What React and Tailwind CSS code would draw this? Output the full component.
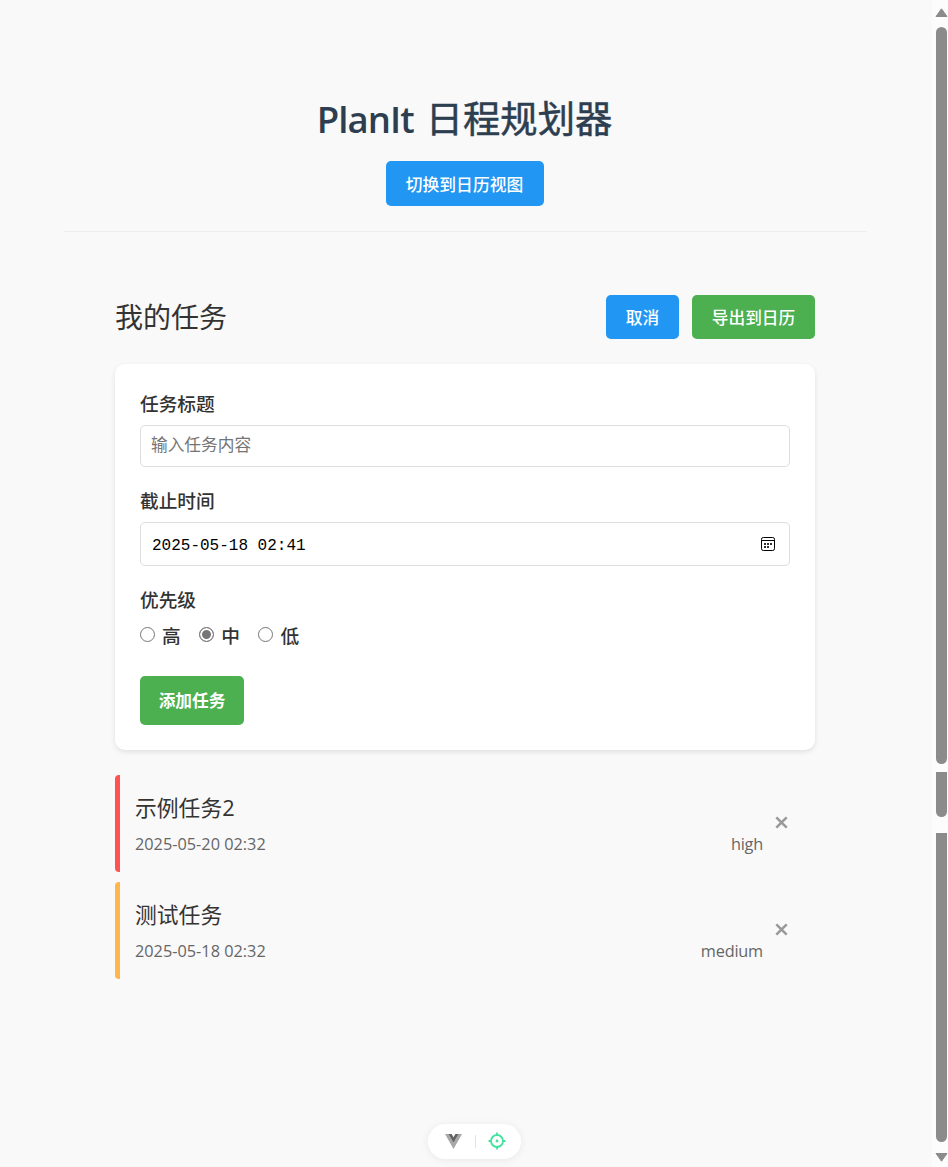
import { useState } from "react";

const PRIORITIES = [
  { value: "high", label: "高" },
  { value: "medium", label: "中" },
  { value: "low", label: "低" },
];

const INITIAL_TASKS = [
  { id: 2, title: "示例任务2", deadline: "2025-05-20 02:32", priority: "high" },
  { id: 1, title: "测试任务", deadline: "2025-05-18 02:32", priority: "medium" },
];

const BORDER_COLORS = {
  high: "border-[#ff5252]",
  medium: "border-[#ffb74d]",
  low: "border-[#4caf50]",
};

function CalendarIcon() {
  return (
    <svg width="14" height="14" viewBox="0 0 14 14" fill="none">
      <rect x="0.5" y="0.5" width="13" height="13" rx="1.8" stroke="#000" />
      <path d="M1 3.5H13" stroke="#000" />
      <path
        d="M3 6h2v2H3zM6 6h2v2H6zM9 6h2v2H9zM3 9h2v2H3zM6 9h2v2H6z"
        fill="#333"
      />
    </svg>
  );
}

function TaskItem({ task, onDelete }) {
  return (
    <li
      className={`flex h-[97px] items-center rounded-[4px] border-l-[5px] pl-[15px] pr-[27px] ${BORDER_COLORS[task.priority]}`}
    >
      <div className="flex-1">
        <div className="mt-[1px] text-[21.8px] leading-[32px] text-[#333]">{task.title}</div>
        <div className="mt-[8px] flex justify-between text-[16.3px] leading-[24px] text-[#666]">
          <span>{task.deadline}</span>
          <span className="tracking-[-0.2px]">{task.priority}</span>
        </div>
      </div>
      <button
        onClick={() => onDelete(task.id)}
        aria-label="删除"
        className="mb-[2px] ml-[12px] flex size-[13px] items-center justify-center text-[#999]"
      >
        <svg width="13" height="13" viewBox="0 0 13 13">
          <path d="M1.3 1.3L11.7 11.7M11.7 1.3L1.3 11.7" stroke="currentColor" strokeWidth="2.5" />
        </svg>
      </button>
    </li>
  );
}

function TaskForm({ onAdd }) {
  const [title, setTitle] = useState("");
  const [deadline, setDeadline] = useState("2025-05-18 02:41");
  const [priority, setPriority] = useState("medium");

  const handleSubmit = (e) => {
    e.preventDefault();
    if (!title.trim()) return;
    onAdd({ id: Date.now(), title, deadline, priority });
    setTitle("");
  };

  return (
    <form
      onSubmit={handleSubmit}
      className="mt-[25px] h-[386px] rounded-[10px] bg-white px-[25px] pt-[25px] shadow-[0_2px_5px_rgba(0,0,0,0.1)]"
    >
      <label className="block text-[18.7px] font-medium leading-[30px] text-[#333]">任务标题</label>
      <input
        value={title}
        onChange={(e) => setTitle(e.target.value)}
        placeholder="输入任务内容"
        className="mt-[6px] block h-[42px] w-full rounded-[5px] border border-[#ddd] px-[10px] pb-[3px] text-[16.7px] outline-none placeholder:text-[#757575]"
      />

      <label className="mt-[19px] block text-[18.7px] font-medium leading-[30px] text-[#333]">截止时间</label>
      <div className="mt-[6px] flex h-[44px] items-center rounded-[5px] border border-[#ddd] pl-[11px] pr-[14px]">
        <input
          value={deadline}
          onChange={(e) => setDeadline(e.target.value)}
          className="min-w-0 flex-1 pt-[3px] font-['Liberation_Mono',monospace] text-[16px] text-black outline-none"
        />
        <CalendarIcon />
      </div>

      <div className="mt-[19px] text-[18.7px] font-medium leading-[30px] text-[#333]">优先级</div>
      <div className="mt-[6px] flex gap-[18.5px]">
        {PRIORITIES.map((p) => (
          <label
            key={p.value}
            className="flex items-center text-[18.7px] font-medium leading-[30px] text-[#333]"
          >
            <input
              type="radio"
              name="priority"
              checked={priority === p.value}
              onChange={() => setPriority(p.value)}
              className="mb-[3px] mr-[7px] size-[15px] appearance-none rounded-full border border-[#767676] bg-white checked:bg-[#767676] checked:shadow-[inset_0_0_0_2px_#fff]"
            />
            {p.label}
          </label>
        ))}
      </div>

      <button
        type="submit"
        className="mt-[25px] h-[49px] w-[104px] rounded-[5px] bg-[#4caf50] text-[16.7px] font-bold text-white"
      >
        添加任务
      </button>
    </form>
  );
}

function DevToolsPill() {
  return (
    <div className="absolute bottom-[8px] left-[428px] flex h-[35px] w-[93px] items-center rounded-full bg-white pl-[17px] shadow-[0_1px_8px_rgba(0,0,0,0.07)]">
      <svg width="17" height="15" viewBox="0 0 17 15">
        <path d="M0 0H3.4L8.5 8.8L13.6 0H17L8.5 15Z" fill="#a8a8a8" />
        <path d="M3.4 0H6.6L8.5 3.3L10.4 0H13.6L8.5 8.8Z" fill="#646464" />
      </svg>
      <span className="ml-[13px] h-[13px] w-px bg-[#e2e2e2]" />
      <svg className="mb-px ml-[12px]" width="18" height="18" viewBox="0 0 18 18" fill="none">
        <circle cx="9" cy="9" r="6" stroke="#42e29d" strokeWidth="1.8" />
        <path d="M9 .5V4M9 14v3.5M.5 9H4M14 9h3.5" stroke="#42e29d" strokeWidth="1.8" />
        <circle cx="9" cy="9" r="1.4" fill="#42e29d" />
      </svg>
    </div>
  );
}

function ScrollTrack() {
  return (
    <div className="flex w-[16px] shrink-0 flex-col items-center bg-[#fcfcfc] pl-[3px]">
      <svg className="mt-[8px] shrink-0" width="13" height="10" viewBox="0 0 13 10">
        <path d="M6.5 .8L12 8.5H1Z" fill="#8b8b8b" stroke="#8b8b8b" strokeLinejoin="round" />
      </svg>
      <div className="mt-[9px] h-[737px] w-[11px] rounded-full bg-[#8b8b8b]" />
      <div className="mt-[8px] h-[45px] w-[11px] rounded-b-full bg-[#8b8b8b]" />
      <div className="mt-[16px] h-[309px] w-[11px] rounded-b-full bg-[#8b8b8b]" />
      <svg className="mt-[10px] shrink-0" width="13" height="10" viewBox="0 0 13 10">
        <path d="M6.5 9.2L12 1.5H1Z" fill="#8b8b8b" stroke="#8b8b8b" strokeLinejoin="round" />
      </svg>
    </div>
  );
}

export default function App() {
  const [view, setView] = useState("list");
  const [showForm, setShowForm] = useState(true);
  const [tasks, setTasks] = useState(INITIAL_TASKS);

  const addTask = (task) => setTasks([task, ...tasks]);
  const deleteTask = (id) => setTasks(tasks.filter((t) => t.id !== id));

  return (
    <div className="relative flex h-[1167px] w-[948px] overflow-hidden bg-[#f9f9f9] font-['Open_Sans','Noto_Sans_CJK_SC',sans-serif]">
      <div className="flex-1 pl-[64px] pr-[65px] pt-[91px]">
        <header className="flex h-[141px] flex-col items-center border-b border-[#eee] pr-[2px]">
          <h1 className="whitespace-nowrap text-[37.3px] font-normal leading-[56px] text-[#2c3e50] [-webkit-text-stroke:0.5px_#2c3e50]">
            <span className="inline-block w-[109px] text-left text-[36.5px] font-semibold tracking-[-0.9px] [-webkit-text-stroke:0]">
              PlanIt
            </span>
            日程规划器
          </h1>
          <button
            onClick={() => setView(view === "list" ? "calendar" : "list")}
            className="mt-[14px] h-[45px] w-[158px] rounded-[5px] bg-[#2196f3] pt-[2px] text-[16.8px] font-medium text-white"
          >
            {view === "list" ? "切换到日历视图" : "切换到列表视图"}
          </button>
        </header>

        <main className="ml-[51px] mt-[63px] w-[700px]">
          <div className="flex h-[44px] items-center justify-between">
            <h2 className="text-[28px] leading-[42px] text-[#333]">我的任务</h2>
            <div className="flex gap-[13px]">
              <button
                onClick={() => setShowForm(!showForm)}
                className="h-[44px] w-[73px] rounded-[5px] bg-[#2196f3] pt-[2px] text-[16.7px] font-medium text-white"
              >
                {showForm ? "取消" : "添加"}
              </button>
              <button className="h-[44px] w-[123px] rounded-[5px] bg-[#4caf50] pt-[2px] text-[16.7px] font-medium text-white">
                导出到日历
              </button>
            </div>
          </div>

          {showForm && <TaskForm onAdd={addTask} />}

          <ul className="mt-[25px] flex flex-col gap-[10px]">
            {tasks.map((task) => (
              <TaskItem key={task.id} task={task} onDelete={deleteTask} />
            ))}
          </ul>
        </main>
      </div>
      <ScrollTrack />
      <DevToolsPill />
    </div>
  );
}
